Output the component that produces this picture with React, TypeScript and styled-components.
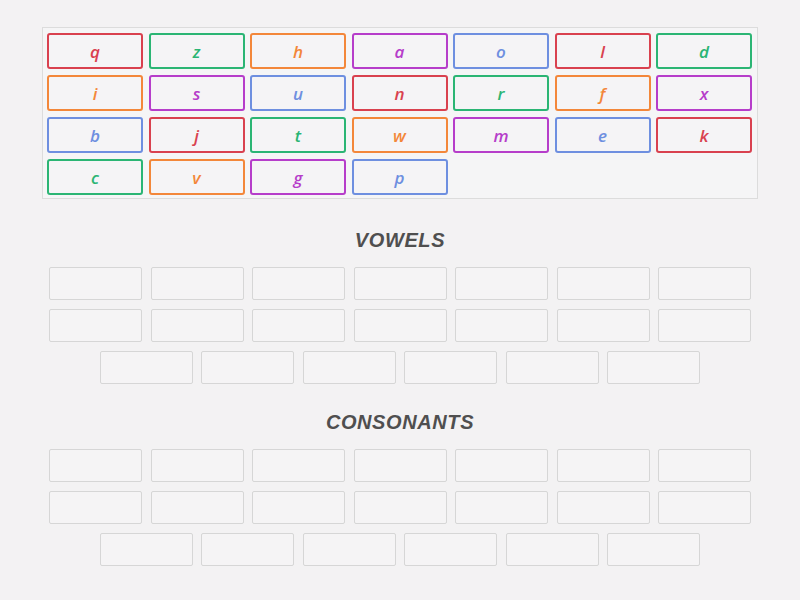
import React from "react";
import styled, { createGlobalStyle } from "styled-components";

const Global = createGlobalStyle`
  html, body { margin: 0; padding: 0; background: #f3f2f3; }
  body { font-family: "Liberation Sans", Arial, sans-serif; }
`;

const Page = styled.div`
  width: 800px;
  height: 600px;
  display: flex;
  flex-direction: column;
  align-items: center;
  padding-top: 27px;
  box-sizing: border-box;
  overflow: hidden;
`;

const Tray = styled.div`
  width: 716px;
  box-sizing: border-box;
  border: 1px solid #dcdcdc;
  background: #f5f5f6;
  padding: 5px 4px 3px 4px;
  display: grid;
  grid-template-columns: repeat(7, 96px);
  column-gap: 5.5px;
  row-gap: 6px;
`;

const COLORS = ["#d9414f", "#2bb574", "#f3873a", "#b63dca", "#6e8fe0"];

const Tile = styled.div<{ $c: string }>`
  height: 36px;
  box-sizing: border-box;
  border: 2px solid ${(p) => p.$c};
  border-radius: 3px;
  color: ${(p) => p.$c};
  background: #f5f4f6;
  display: flex;
  align-items: center;
  justify-content: center;
  font-family: "Open Sans", sans-serif;
  font-style: italic;
  font-weight: 600;
  font-size: 17px;
  line-height: 1;
`;

const Heading = styled.div<{ $top: number }>`
  padding-top: ${(p) => p.$top}px;
  margin-bottom: 14px;
  height: 26px;
  line-height: 26px;
  font-family: "Liberation Sans", Arial, sans-serif;
  font-weight: 700;
  font-style: italic;
  font-size: 20px;
  color: #4f4f4f;
  letter-spacing: 0.6px;
`;

const Zones = styled.div`
  width: 702px;
  display: flex;
  flex-wrap: wrap;
  justify-content: center;
  column-gap: 8.5px;
  row-gap: 9px;
`;

const Zone = styled.div`
  width: 93px;
  height: 33px;
  box-sizing: border-box;
  border: 1px solid #d6d6d6;
  border-radius: 2px;
  background: #f5f4f5;
`;

const letters = "qzhaoldisunrfxbjtwmekcvgp".split("");

export default function App() {
  const zones = Array.from({ length: 20 });
  return (
    <>
      <Global />
      <Page>
        <Tray>
          {letters.map((l, i) => (
            <Tile key={i} $c={COLORS[i % 5]}>
              {l}
            </Tile>
          ))}
        </Tray>
        <Heading $top={28}>VOWELS</Heading>
        <Zones>
          {zones.map((_, i) => (
            <Zone key={i} />
          ))}
        </Zones>
        <Heading $top={25}>CONSONANTS</Heading>
        <Zones>
          {zones.map((_, i) => (
            <Zone key={i} />
          ))}
        </Zones>
      </Page>
    </>
  );
}
